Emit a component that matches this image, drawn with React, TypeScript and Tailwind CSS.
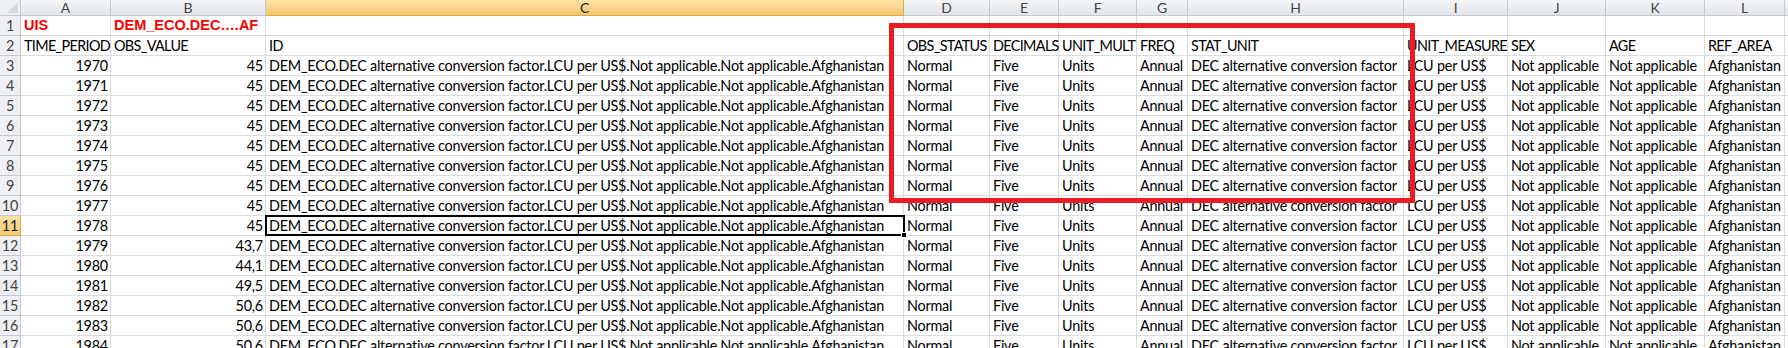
import React from 'react';

const GRID =
  'grid grid-cols-[21px_90px_155px_638px_86px_69px_78px_51px_216px_104px_98px_99px_80px_1fr]';

const LETTERS = ['A', 'B', 'C', 'D', 'E', 'F', 'G', 'H', 'I', 'J', 'K', 'L', ''];

const HEADERS = [
  'TIME_PERIOD',
  'OBS_VALUE',
  'ID',
  'OBS_STATUS',
  'DECIMALS',
  'UNIT_MULT',
  'FREQ',
  'STAT_UNIT',
  'UNIT_MEASURE',
  'SEX',
  'AGE',
  'REF_AREA',
  '',
];

const VALUES = ['45', '45', '45', '45', '45', '45', '45', '45', '45', '43,7', '44,1', '49,5', '50,6', '50,6', '50,6'];

const ID_TEXT =
  'DEM_ECO.DEC alternative conversion factor.LCU per US$.Not applicable.Not applicable.Afghanistan';

const dataRows = VALUES.map((v, i) => [
  String(1970 + i),
  v,
  ID_TEXT,
  'Normal',
  'Five',
  'Units',
  'Annual',
  'DEC alternative conversion factor',
  'LCU per US$',
  'Not applicable',
  'Not applicable',
  'Afghanistan',
  '',
]);

// Calibri-ish: Lato squeezed a little
const cellFont = "font-['Lato',sans-serif] text-[14.4px] tracking-[-0.22px]";

const ColHeader = ({ label, selected }: { label: string; selected?: boolean }) => (
  <div
    className={`h-[16px] border-r border-b flex items-center justify-center text-[14px] leading-none ${
      selected
        ? 'bg-gradient-to-b from-[#fbe3a8] to-[#f5c76e] border-[#e0a848] text-[#222]'
        : 'bg-gradient-to-b from-[#f3f5f7] to-[#e3e6ea] border-[#c5c9cf] text-[#444]'
    } ${cellFont}`}
  >
    {label}
  </div>
);

const RowHeader = ({ n, selected }: { n: number; selected?: boolean }) => (
  <div
    className={`h-[20px] border-r border-b flex items-end justify-center pb-[1px] leading-[16px] ${
      selected
        ? 'bg-gradient-to-b from-[#fbe3a8] to-[#f5c76e] border-[#e0a848] text-[#222]'
        : 'bg-[#eef0f3] border-[#c5c9cf] text-[#444]'
    } ${cellFont}`}
  >
    {n}
  </div>
);

const Cell = ({
  text,
  right,
  red,
  caps,
  selected,
}: {
  text: string;
  right?: boolean;
  red?: boolean;
  caps?: boolean;
  selected?: boolean;
}) => (
  <div
    className={`relative h-[20px] border-r border-b border-[#dadcdd] flex items-end pb-[1px] whitespace-nowrap overflow-visible ${
      right ? 'justify-end pr-[2px]' : 'justify-start pl-[3px]'
    } ${
      red
        ? "font-['Liberation_Sans',Arial,sans-serif] font-bold text-[14.5px] text-[#ff0000] leading-[17px]"
        : `${cellFont} text-black leading-[17px]`
    } ${caps ? 'tracking-[-0.65px]' : ''}`}
  >
    <span className={right ? '' : 'relative z-10'}>{text}</span>
    {selected && (
      <div className="absolute -left-[1px] -top-[1px] right-[-2px] bottom-[-1px] border-2 border-black z-20 pointer-events-none">
        <div className="absolute -right-[4px] -bottom-[4px] w-[6px] h-[6px] bg-black border border-white" />
      </div>
    )}
  </div>
);

export default function App() {
  return (
    <div className="relative w-[1788px] h-[348px] overflow-hidden bg-white">
      <div className={GRID}>
        <div className="h-[16px] border-r border-b border-[#c5c9cf] bg-[#eef0f3] relative">
          <div className="absolute right-[2px] bottom-[2px] w-0 h-0 border-l-[11px] border-l-transparent border-b-[11px] border-b-[#d6dadf]" />
        </div>
        {LETTERS.map((l, i) => (
          <ColHeader key={i} label={l} selected={l === 'C'} />
        ))}

        <RowHeader n={1} />
        <Cell text="UIS" red />
        <Cell text="DEM_ECO.DEC….AF" red />
        {LETTERS.slice(2).map((_, i) => (
          <Cell key={i} text="" />
        ))}

        <RowHeader n={2} />
        {HEADERS.map((h, i) => (
          <Cell key={i} text={h} caps />
        ))}

        {dataRows.map((row, r) => (
          <React.Fragment key={r}>
            <RowHeader n={r + 3} selected={r + 3 === 11} />
            {row.map((t, c) => (
              <Cell key={c} text={t} right={c < 2} selected={r + 3 === 11 && c === 2} />
            ))}
          </React.Fragment>
        ))}
      </div>

      <div className="absolute left-[889px] top-[23px] w-[526px] h-[180px] border-[5px] border-[#ed1c24] z-30 pointer-events-none" />
    </div>
  );
}
